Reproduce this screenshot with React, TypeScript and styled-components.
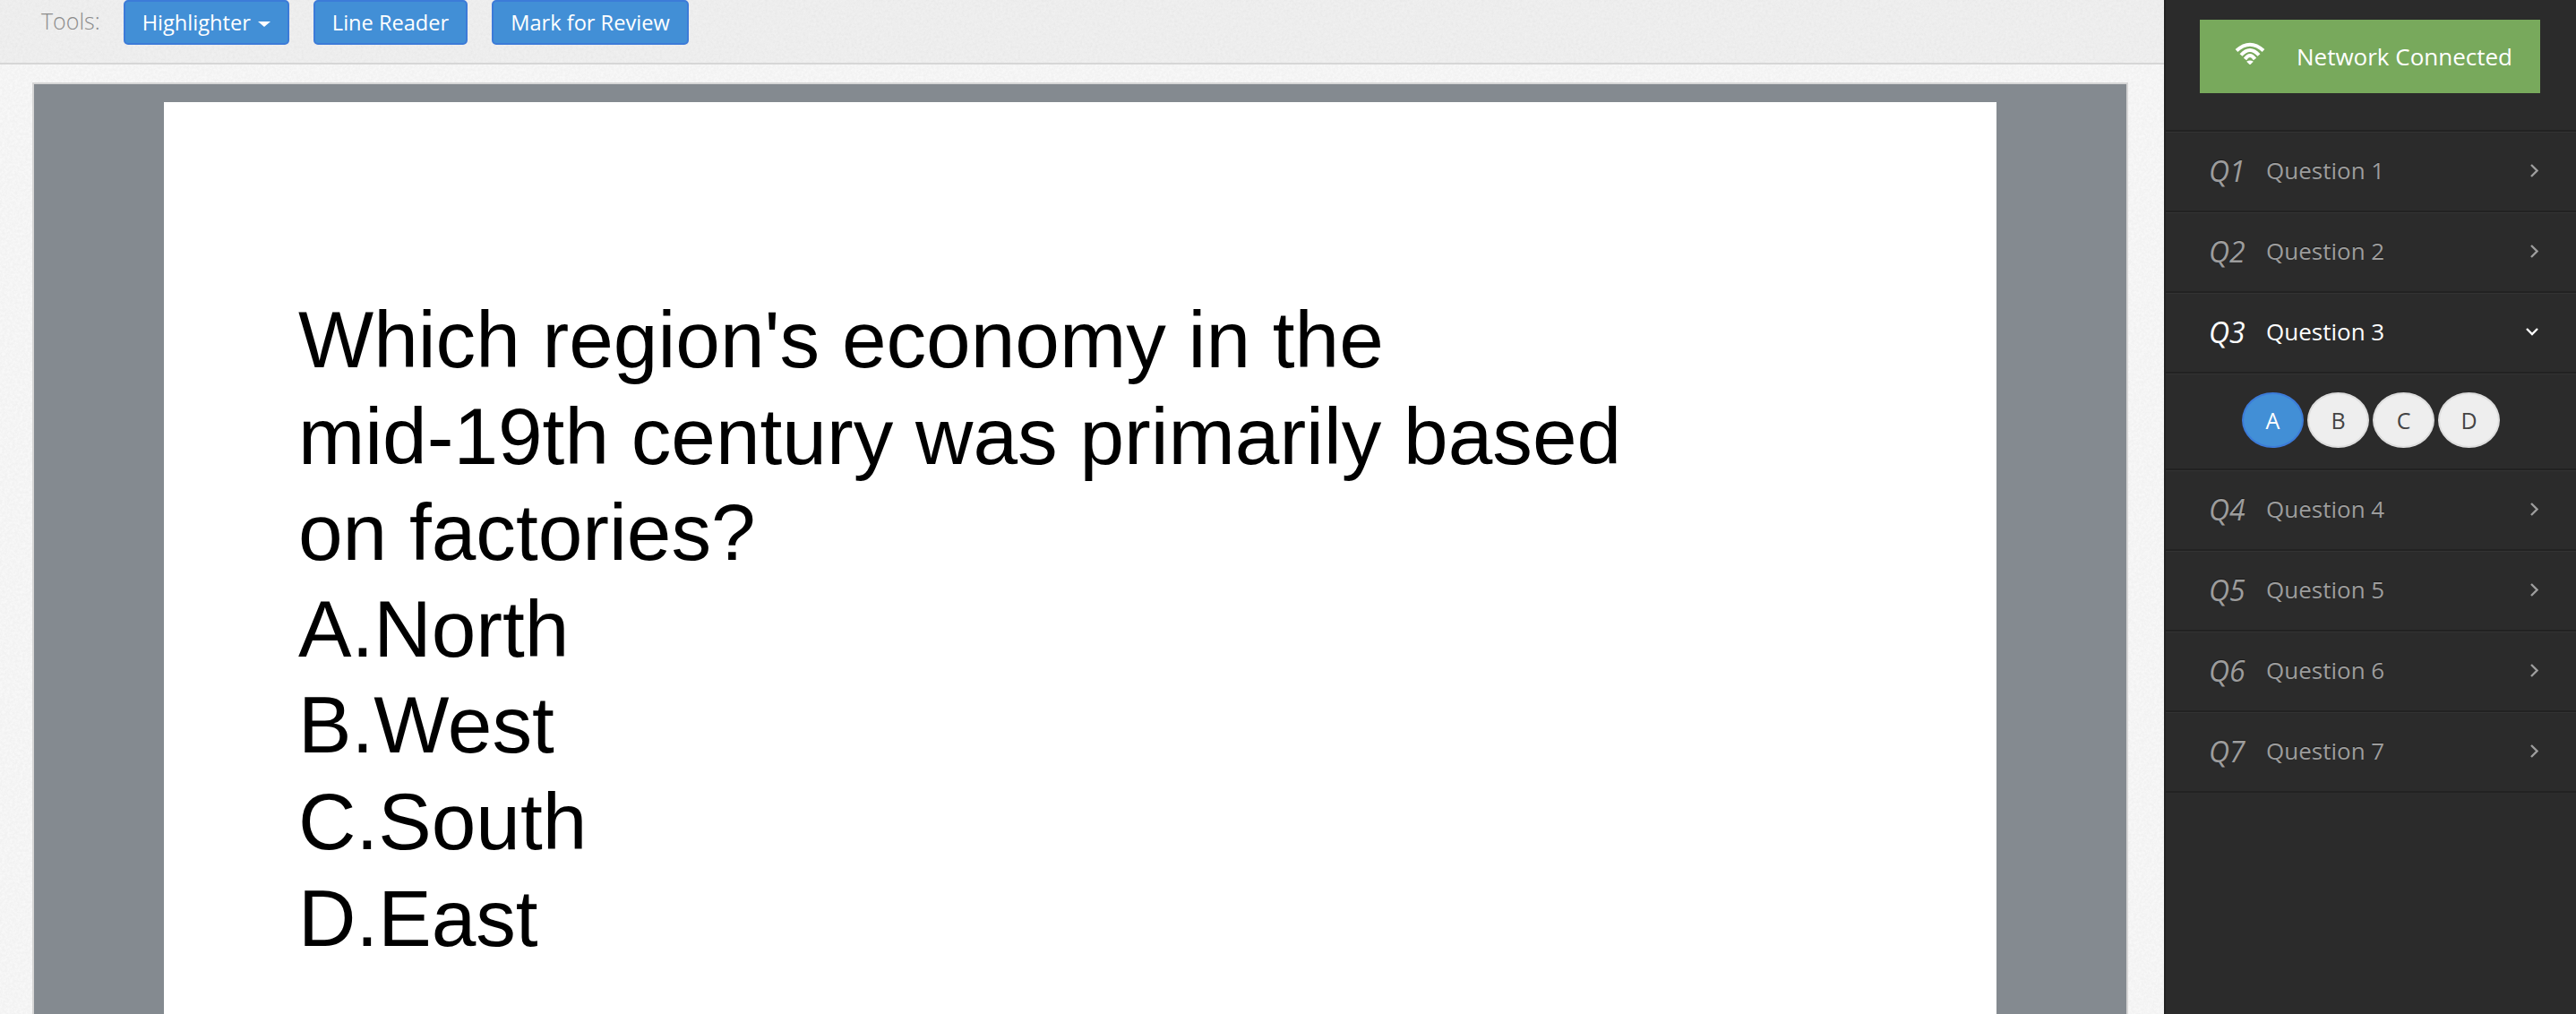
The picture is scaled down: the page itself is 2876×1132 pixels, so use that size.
import React from 'react';
import styled, { createGlobalStyle } from 'styled-components';

const questions = [1, 2, 3, 4, 5, 6, 7];
const choices = ['A', 'B', 'C', 'D'];
const lines = [
  'Which region\'s economy in the',
  'mid-19th century was primarily based',
  'on factories?',
  'A.North',
  'B.West',
  'C.South',
  'D.East',
];

// soft paper grain behind the toolbar and the page
const grain = `url("data:image/svg+xml,%3Csvg xmlns='http://www.w3.org/2000/svg' width='400' height='400'%3E%3Cfilter id='n'%3E%3CfeTurbulence type='fractalNoise' baseFrequency='.35' numOctaves='3'/%3E%3CfeColorMatrix values='0 0 0 0 .4 0 0 0 0 .4 0 0 0 0 .4 .16 0 0 0 -.04'/%3E%3C/filter%3E%3Crect width='400' height='400' filter='url(%23n)'/%3E%3C/svg%3E")`;

function WifiIcon() {
  return (
    <WifiSvg width="34" height="25" viewBox="0 0 34 25">
      <path d="M2 9.5 Q17 -4 32 9.5" />
      <path d="M7 14.5 Q17 3.5 27 14.5" />
      <path d="M11.5 19 Q17 11 22.5 19" />
      <WifiDot d="M17 25.5 L13.2 21.8 Q17 19 20.8 21.8 Z" />
    </WifiSvg>
  );
}

function App() {
  return (
    <Page>
      <GlobalStyle />
      <Main>
        <Toolbar>
          <ToolsLabel>Tools:</ToolsLabel>
          <ToolButton>
            Highlighter
            <Caret />
          </ToolButton>
          <ToolButton>Line Reader</ToolButton>
          <ToolButton>Mark for Review</ToolButton>
        </Toolbar>
        <Viewer>
          <Sheet>
            {lines.map((line) => (
              <QuestionLine key={line}>{line}</QuestionLine>
            ))}
          </Sheet>
        </Viewer>
      </Main>
      <Sidebar>
        <StatusArea>
          <NetworkStatus>
            <WifiIcon />
            <span>Network Connected</span>
          </NetworkStatus>
        </StatusArea>
        {questions.map((n) => (
          <React.Fragment key={n}>
            <QuestionRow $active={n === 3}>
              <QuestionNumber>Q{n}</QuestionNumber>
              <QuestionName>Question {n}</QuestionName>
              {n === 3 ? (
                <RowIcon width="14" height="9" viewBox="0 0 14 9">
                  <polyline points="1,1 7,7 13,1" />
                </RowIcon>
              ) : (
                <RowIcon width="9" height="15" viewBox="0 0 9 15">
                  <polyline points="1,1 7.5,7.5 1,14" />
                </RowIcon>
              )}
            </QuestionRow>
            {n === 3 && (
              <ChoiceRow>
                {choices.map((c) => (
                  <Choice key={c} $selected={c === 'A'}>{c}</Choice>
                ))}
              </ChoiceRow>
            )}
          </React.Fragment>
        ))}
      </Sidebar>
    </Page>
  );
}

export default App;

const GlobalStyle = createGlobalStyle`
  html, body {
    margin: 0;
    height: 100%;
    overflow: hidden;
  }

  * {
    box-sizing: border-box;
  }
`;

const Page = styled.div`
  display: flex;
  height: 1132px;
  font-family: 'Open Sans', 'Liberation Sans', sans-serif;
  background-color: #f8f8f8;
  background-image: ${grain};
`;

const Main = styled.div`
  flex: 1;
  min-width: 0;
  display: flex;
  flex-direction: column;
`;

const Toolbar = styled.div`
  display: flex;
  align-items: flex-start;
  flex-shrink: 0;
  height: 72px;
  padding-left: 46px;
  background-color: #f0f0f0;
  background-image: ${grain};
  border-bottom: 2px solid #d6d6d6;
`;

const ToolsLabel = styled.span`
  margin-right: 26px;
  font-size: 25px;
  font-weight: 300;
  line-height: 46px;
  color: #8c8c8c;
`;

const ToolButton = styled.button`
  display: flex;
  align-items: center;
  height: 50px;
  margin-right: 27px;
  padding: 0 19px;
  background-color: #428fd6;
  border: 2px solid #3c7bd8;
  border-radius: 5px;
  color: #ffffff;
  font-family: inherit;
  font-size: 23.6px;
  white-space: nowrap;
`;

const Caret = styled.span`
  width: 0;
  height: 0;
  margin: 4px 0 0 8px;
  border-top: 6px solid #ffffff;
  border-left: 7px solid transparent;
  border-right: 7px solid transparent;
`;

const Viewer = styled.div`
  flex: 1;
  min-height: 0;
  display: flex;
  margin: 20px 40px 0 36px;
  padding: 20px 145px 0 145px;
  background-color: #848a90;
  border-top: 2px solid #d6d6d6;
  border-left: 2px solid #d6d6d6;
  border-right: 2px solid #d6d6d6;
`;

const Sheet = styled.div`
  flex: 1;
  padding: 212px 0 0 150px;
  background-color: #ffffff;
`;

const QuestionLine = styled.div`
  font-family: 'Liberation Sans', Arial, sans-serif;
  font-size: 89.2px;
  line-height: 107.6px;
  color: #000000;
  white-space: nowrap;
`;

const Sidebar = styled.div`
  flex-shrink: 0;
  width: 460px;
  background-color: #2b2b2b;
  border-left: 2px solid #222222;
`;

const StatusArea = styled.div`
  height: 147px;
  padding: 22px 40px 0 38px;
  border-bottom: 2px solid #222222;
`;

const NetworkStatus = styled.div`
  display: flex;
  align-items: center;
  gap: 35px;
  height: 82px;
  padding: 0 0 0 39px;
  background-color: #78a95c;
  color: #ffffff;
  font-size: 26px;
  white-space: nowrap;
`;

const WifiSvg = styled.svg`
  flex-shrink: 0;
  margin-top: -8px;
  fill: none;
  stroke: #ffffff;
  stroke-width: 4;
`;

const WifiDot = styled.path`
  fill: #ffffff;
  stroke: none;
`;

const QuestionRow = styled.div<{ $active: boolean }>`
  display: flex;
  align-items: center;
  height: 90px;
  padding: 0 42px 2px 48px;
  border-bottom: 2px solid #222222;
  box-shadow: inset 0 1px 0 #333333;
  color: ${(props) => (props.$active ? '#ffffff' : '#9d9d9d')};
  text-shadow: ${(props) => (props.$active ? 'none' : '0 -1px 0 #1a1a1a')};
`;

const QuestionNumber = styled.span`
  width: 64px;
  font-size: 32px;
  font-style: italic;
  font-weight: 400;
`;

const QuestionName = styled.span`
  flex: 1;
  font-size: 26px;
`;

const RowIcon = styled.svg`
  fill: none;
  stroke: currentColor;
  stroke-width: 2.4;
`;

const ChoiceRow = styled.div`
  display: flex;
  justify-content: center;
  gap: 4px;
  height: 108px;
  padding: 21px 0 0 0;
  border-bottom: 2px solid #222222;
  box-shadow: inset 0 1px 0 #333333;
`;

const Choice = styled.div<{ $selected: boolean }>`
  display: flex;
  align-items: center;
  justify-content: center;
  width: 69px;
  height: 62px;
  border-radius: 50%;
  border: 2px solid ${(props) => (props.$selected ? '#3c7bd8' : '#dddddd')};
  background-color: ${(props) => (props.$selected ? '#428fd6' : '#eeeeee')};
  color: ${(props) => (props.$selected ? '#ffffff' : '#444444')};
  font-size: 25px;
`;
